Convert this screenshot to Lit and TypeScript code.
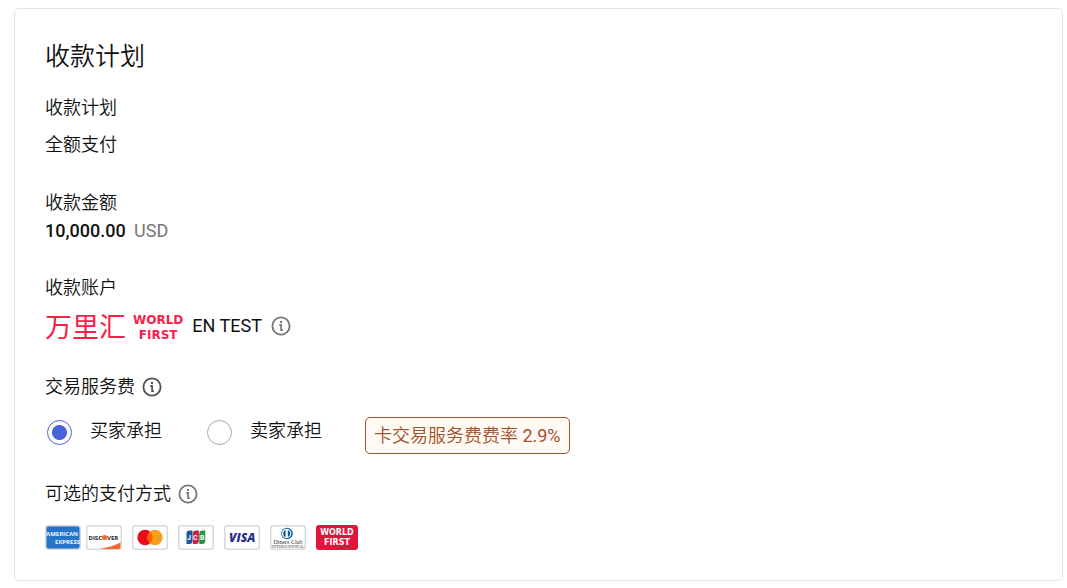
import { LitElement, html, svg, css } from "lit";
import { customElement, property, state } from "lit/decorators.js";

@customElement("info-button")
class InfoButton extends LitElement {
  @property() label = "";
  @property({ type: Boolean, reflect: true }) strong = false;

  static styles = css`
    :host { display: inline-flex; color: #757575; }
    :host([strong]) { color: #4f4f4f; }
    .info { display: flex; padding: 0; border: 0; background: none; color: inherit; cursor: pointer; }
  `;

  render() {
    return html`<button class="info" type="button" aria-label=${this.label}>
      <svg width="20" height="20" viewBox="0 0 20 20" fill="none" aria-hidden="true">
        <circle cx="10" cy="10" r="8.6" stroke="currentColor" stroke-width="1.8" />
        <rect x="9" y="5" width="2" height="2" fill="currentColor" />
        <path d="M8.2 8.8h1.9v5.6M9.2 14.2h2.6" stroke="currentColor" stroke-width="1.7" />
      </svg>
    </button>`;
  }
}

const frame = svg`<rect x="0.75" y="0.75" width="34.5" height="23.5" rx="2.5" fill="#fff" stroke="#d9d9d9" stroke-width="1.5" />`;

const cards = [
  {
    name: "American Express",
    art: svg`<rect x="0.75" y="0.75" width="34.5" height="23.5" rx="2.5" fill="#2474ca" stroke="#d9d9d9" stroke-width="1.5" />
      <text class="amex" x="1" y="11">AMERICAN</text>
      <text class="amex" x="35" y="19" text-anchor="end">EXPRESS</text>`,
  },
  {
    name: "Discover",
    art: svg`${frame}<path d="M14 24C22 22.5 29 20.5 34.5 17.5V22a2 2 0 0 1-2 2z" fill="#f26b2b" />
      <text class="disc" x="16" y="15" text-anchor="end">DISC</text>
      <text class="disc" x="21" y="15">VER</text>
      <circle cx="18.6" cy="12.5" r="2.6" fill="#f26b2b" />`,
  },
  {
    name: "Mastercard",
    art: svg`${frame}<circle cx="13" cy="12.5" r="7.7" fill="#eb0a1a" />
      <circle cx="23" cy="12.5" r="7.7" fill="#f79f1a" />
      <path d="M18 6.65a7.7 7.7 0 0 1 0 11.7 7.7 7.7 0 0 1 0-11.7z" fill="#ff5f00" />`,
  },
  {
    name: "JCB",
    art: svg`${frame}<path d="M8.5 8.5a3 3 0 0 1 3-3h3v10.5a3 3 0 0 1-3 3h-3z" fill="#16589e" />
      <path d="M14.9 8.5a3 3 0 0 1 3-3h3v10.5a3 3 0 0 1-3 3h-3z" fill="#cf1f42" />
      <path d="M21.3 8.5a3 3 0 0 1 3-3h3v10.5a3 3 0 0 1-3 3h-3z" fill="#1f9a42" />
      <text class="jcb" x="9" y="15">J</text>
      <text class="jcb" x="15" y="15">C</text>
      <text class="jcb" x="22" y="15">B</text>`,
  },
  {
    name: "Visa",
    art: svg`${frame}<text class="visa" x="5" y="17">VISA</text>`,
  },
  {
    name: "Diners Club",
    art: svg`${frame}<circle cx="17" cy="8.5" r="5.8" fill="#0b5c9c" />
      <circle cx="16.6" cy="8.5" r="4.7" fill="#fff" />
      <path d="M15.6 5a3.7 3.7 0 0 0 0 7zM17.8 5a3.7 3.7 0 0 1 0 7z" fill="#0b5c9c" />
      <text class="diners" x="18" y="19">Diners Club</text>
      <text class="diners small" x="18" y="23">INTERNATIONAL</text>`,
  },
];

@customElement("app-root")
class AppRoot extends LitElement {
  @state() payer = "buyer";

  static styles = css`
    :host {
      display: block;
      padding: 8px 4px 7px 14px;
      font: 350 18px/28px Roboto, "Noto Sans CJK SC", sans-serif;
      color: #111;
    }
    .card { border: 1px solid #e4e4e4; border-radius: 5px; padding: 30px; background: #fff; }
    .title { margin: 0; font-size: 25px; line-height: 36px; font-weight: 350; }
    .list { margin: 0; }
    .list dt, .list dd { margin: 0; }
    .plan { margin-top: 19px; display: grid; gap: 9px; }
    .block { margin-top: 30px; }
    .amount { line-height: 27px; }
    .number { font-weight: 500; }
    .latin { font-weight: 400; }
    .currency { margin-left: 4px; font-weight: 400; color: #757575; }
    .row { display: flex; align-items: center; gap: 7px; }
    .list .account { margin-top: 7px; gap: 9px; }
    .wf { display: flex; align-items: center; gap: 7px; color: #fb2049; }
    .wf-cn { font: 400 27px/34px "Noto Sans CJK SC", sans-serif; }
    .wf-en { padding-top: 4px; font: 700 12px/15px "DejaVu Sans", sans-serif; text-align: center; }
    .fee { margin-top: 30px; }
    .options { display: flex; align-items: flex-start; margin-top: 16px; gap: 43px; }
    .option { display: flex; align-items: center; gap: 18px; cursor: pointer; }
    .radio {
      appearance: none; box-sizing: border-box; width: 25px; height: 25px; margin: 2px 0 0 2px;
      border: 1px solid #a8a8a8; border-radius: 50%; background: #fff; cursor: pointer;
    }
    .radio:checked { border-color: #4a62e0; background: radial-gradient(circle, #4a62e0 7px, #fff 8px); }
    .rate { border: 1px solid #a0522d; border-radius: 5px; background: #fffaf3; color: #a0522d; padding: 4px 8px; line-height: 27px; }
    .methods { margin-top: 26px; }
    .cards { display: flex; align-items: center; gap: 10px; margin: 17px 0 0; padding: 0; list-style: none; }
    .cards li { display: flex; }
    .cards li:first-child { margin-right: -5px; }
    .amex { font: 700 6px "Open Sans", sans-serif; fill: #f2f8ff; }
    .disc { font: 700 6px "Open Sans", sans-serif; fill: #222; }
    .jcb { font: 700 7px Roboto, sans-serif; fill: #fff; }
    .visa { font: italic 800 12px "Open Sans", sans-serif; fill: #24308f; }
    .diners { font: 6px "Liberation Serif", serif; fill: #333; text-anchor: middle; }
    .diners.small { font-size: 4px; }
    .badge {
      width: 42px; height: 25px; box-sizing: border-box; padding-top: 3px; border-radius: 3px; background: #e3143c; color: #fff;
      font: 700 8px/10px "DejaVu Sans", sans-serif; text-align: center;
    }
  `;

  option(value: string, label: string) {
    return html`<label class="option">
      <input class="radio" type="radio" name="payer" .value=${value}
        .checked=${this.payer === value} @change=${() => (this.payer = value)} />
      <span>${label}</span>
    </label>`;
  }

  render() {
    return html`<section class="card" lang="zh-CN">
      <h1 class="title">收款计划</h1>
      <dl class="list">
        <div class="plan"><dt>收款计划</dt><dd>全额支付</dd></div>
        <div class="block">
          <dt>收款金额</dt>
          <dd class="amount"><span class="number">10,000.00</span> <span class="currency">USD</span></dd>
        </div>
        <div class="block">
          <dt>收款账户</dt>
          <dd class="row account">
            <span class="wf"><span class="wf-cn">万里汇</span><span class="wf-en">WORLD<br />FIRST</span></span>
            <span class="latin">EN TEST</span>
            <info-button label="收款账户说明"></info-button>
          </dd>
        </div>
      </dl>
      <div class="fee" role="radiogroup" aria-labelledby="fee-label">
        <div class="row"><span id="fee-label">交易服务费</span><info-button strong label="交易服务费说明"></info-button></div>
        <div class="options">
          ${this.option("buyer", "买家承担")}
          ${this.option("seller", "卖家承担")}
          <div class="rate">卡交易服务费费率 <span class="latin">2.9%</span></div>
        </div>
      </div>
      <div class="methods">
        <div class="row"><span>可选的支付方式</span><info-button label="支付方式说明"></info-button></div>
        <ul class="cards">
          ${cards.map((c) => html`<li><svg width="36" height="25" viewBox="0 0 36 25" role="img" aria-label=${c.name}>${c.art}</svg></li>`)}
          <li><div class="badge">WORLD<br />FIRST</div></li>
        </ul>
      </div>
    </section>`;
  }
}
